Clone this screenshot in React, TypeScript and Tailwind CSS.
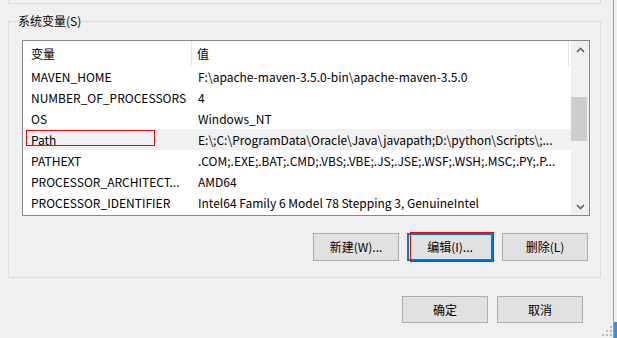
import React from "react";

const font = { fontFamily: '"Noto Sans CJK SC", "Noto Sans", sans-serif' };

const rows: [string, string][] = [
  ["MAVEN_HOME", "F:\\apache-maven-3.5.0-bin\\apache-maven-3.5.0"],
  ["NUMBER_OF_PROCESSORS", "4"],
  ["OS", "Windows_NT"],
  ["Path", "E:\\;C:\\ProgramData\\Oracle\\Java\\javapath;D:\\python\\Scripts\\;..."],
  ["PATHEXT", ".COM;.EXE;.BAT;.CMD;.VBS;.VBE;.JS;.JSE;.WSF;.WSH;.MSC;.PY;.P..."],
  ["PROCESSOR_ARCHITECT...", "AMD64"],
  ["PROCESSOR_IDENTIFIER", "Intel64 Family 6 Model 78 Stepping 3, GenuineIntel"],
];

function Btn({ label, focused }: { label: string; focused?: boolean }) {
  return (
    <div
      className={
        "relative flex h-[28px] w-[86px] items-center justify-center bg-[#e1e1e1] text-[12px] text-black " +
        (focused ? "border-2 border-[#0078d7]" : "border border-[#adadad]")
      }
    >
      {label}
      {focused && (
        <div className="absolute left-[1px] top-[-3px] h-[30px] w-[84px] border border-[#ff0000]" />
      )}
    </div>
  );
}

export default function App() {
  return (
    <div className="flex h-[338px] w-[617px] overflow-hidden bg-[#f0f0f0]" style={font}>
      <div className="relative flex w-[613px] flex-col">
        {/* previous group box bottom */}
        <div className="ml-[8px] h-[4px] w-[593px] border-x border-b border-[#dcdcdc]" />
        {/* system variables group */}
        <div className="relative ml-[8px] mt-[17px] h-[257px] w-[593px] border border-[#dcdcdc] pl-[13px] pt-[18px]">
          <div className="absolute left-[8px] top-[-9px] bg-[#f0f0f0] px-[1px] text-[12px] leading-[16px] text-black">
            系统变量(S)
          </div>
          {/* list view */}
          <div className="flex h-[176px] w-[568px] border border-[#828790] bg-white">
            <div className="flex w-[548px] flex-col">
              <div className="flex h-[25px] text-[12px] text-black">
                <div className="flex w-[169px] items-center border-r border-[#e5e5e5] pl-[8px]">变量</div>
                <div className="flex w-[377px] items-center border-r border-[#e5e5e5] pl-[5px]">值</div>
              </div>
              {rows.map(([n, v]) => (
                <div
                  key={n}
                  className={
                    "relative flex h-[21px] items-center whitespace-nowrap text-[12px] text-black " +
                    (n === "Path" ? "bg-[#f0f0f0]" : "")
                  }
                >
                  <div className="w-[170px] pl-[8px]">{n}</div>
                  <div className="pl-[5px]">{v}</div>
                  {n === "Path" && (
                    <div className="absolute left-[3px] top-[1px] h-[16px] w-[129px] border border-[#ff0000]" />
                  )}
                </div>
              ))}
            </div>
            {/* scrollbar */}
            <div className="flex w-[18px] flex-col bg-[#f0f0f0]">
              <div className="flex h-[17px] items-center justify-center">
                <svg width="9" height="6" viewBox="0 0 9 6">
                  <polyline points="1,5 4.5,1.5 8,5" fill="none" stroke="#606060" strokeWidth="1.6" />
                </svg>
              </div>
              <div className="mt-[39px] ml-[0px] h-[44px] w-[16px] bg-[#cdcdcd]" />
              <div className="flex-1" />
              <div className="flex h-[17px] items-center justify-center">
                <svg width="9" height="6" viewBox="0 0 9 6">
                  <polyline points="1,1 4.5,4.5 8,1" fill="none" stroke="#606060" strokeWidth="1.6" />
                </svg>
              </div>
            </div>
          </div>
          {/* buttons */}
          <div className="mt-[17px] flex pl-[291px]">
            <Btn label="新建(W)..." />
            <div className="w-[8px]" />
            <Btn label="编辑(I)..." focused />
            <div className="w-[9px]" />
            <Btn label="删除(L)" />
          </div>
        </div>
        {/* dialog buttons */}
        <div className="mt-[18px] flex pl-[402px]">
          <div className="flex h-[27px] w-[86px] items-center justify-center border border-[#adadad] bg-[#e1e1e1] text-[12px] text-black">
            确定
          </div>
          <div className="w-[9px]" />
          <div className="flex h-[27px] w-[86px] items-center justify-center border border-[#adadad] bg-[#e1e1e1] text-[12px] text-black">
            取消
          </div>
        </div>
        {/* resize grip */}
        <svg className="absolute bottom-[1px] right-[0px]" width="12" height="12" viewBox="0 0 12 12">
          {[
            [9, 1],
            [9, 5],
            [5, 5],
            [9, 9],
            [5, 9],
            [1, 9],
          ].map(([x, y], i) => (
            <rect key={i} x={x} y={y} width="2" height="2" fill="#bcbcbc" />
          ))}
        </svg>
      </div>
      <div className="h-full w-[1px] bg-[#a0a0a0]" />
      <div className="flex w-[3px] flex-col bg-[#f0f0f0]">
        <div className="flex-1" />
        <div className="h-[16px] bg-[#3c8fd6]" />
      </div>
    </div>
  );
}
